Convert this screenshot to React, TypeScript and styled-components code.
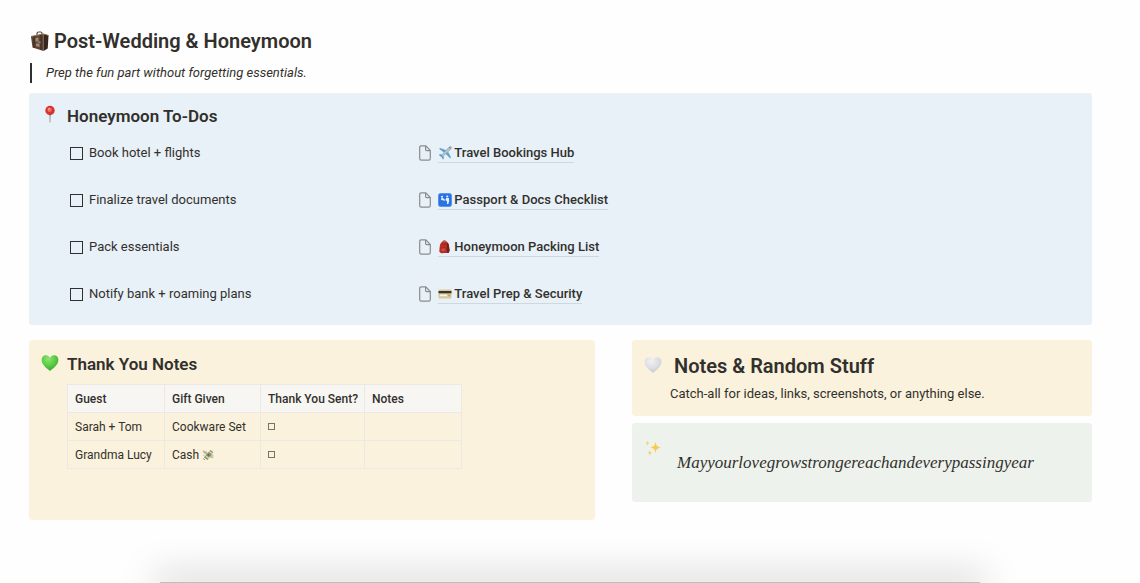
import React from "react";
import styled, { createGlobalStyle } from "styled-components";

const GlobalStyle = createGlobalStyle`
  *, *::before, *::after { box-sizing: border-box; }
  body {
    margin: 0;
    background: #fefefe;
    color: #32302c;
    font-family: Roboto, "Liberation Sans", sans-serif;
    font-size: 13px;
    line-height: 20px;
  }
`;

const Page = styled.main`
  padding: 28px 48px 62px 29px;
`;

const PageTitle = styled.h1`
  display: flex;
  align-items: center;
  gap: 3px;
  margin: 0;
  font-size: 20px;
  line-height: 26px;
  font-weight: 600;
`;

const Quote = styled.blockquote`
  margin: 9px 0 10px 1px;
  padding-left: 14px;
  border-left: 2px solid #32302c;
  font-style: italic;
`;

type Tone = "blue" | "yellow" | "green";
const tones: Record<Tone, string> = {
  blue: "#e8f0f8",
  yellow: "#faf2dd",
  green: "#edf2ec",
};

const Callout = styled.section<{ $tone: Tone; $top?: number; $bottom?: number }>`
  display: grid;
  grid-template-columns: 24px minmax(0, 1fr);
  column-gap: 5px;
  align-items: start;
  padding: ${(p) => p.$top ?? 12}px 10px ${(p) => p.$bottom ?? 12}px 9px;
  border-radius: 3px;
  background: ${(p) => tones[p.$tone]};
`;

const CalloutIcon = styled.span<{ $large?: boolean }>`
  display: flex;
  justify-content: center;
  align-items: flex-end;
  height: ${(p) => (p.$large ? 22 : 20)}px;
`;

const Heading = styled.h2<{ $large?: boolean }>`
  margin: 0;
  padding-left: ${(p) => (p.$large ? 4 : 0)}px;
  font-size: ${(p) => (p.$large ? 20 : 17)}px;
  line-height: ${(p) => (p.$large ? 28 : 24)}px;
  font-weight: 600;
`;

const TodoColumns = styled.div`
  display: grid;
  grid-template-columns: 349fr 665fr;
  margin-top: 15px;
`;

const List = styled.ul`
  display: flex;
  flex-direction: column;
  gap: 27px;
  margin: 0;
  padding: 0 0 0 3px;
  list-style: none;
`;

const Item = styled.li`
  display: flex;
  align-items: center;
  height: 20px;
`;

const TodoLabel = styled.label`
  display: flex;
  align-items: center;
  gap: 6px;
`;

const Check = styled.input<{ $small?: boolean }>`
  appearance: none;
  display: block;
  flex: none;
  width: ${(p) => (p.$small ? 7 : 13)}px;
  height: ${(p) => (p.$small ? 7 : 13)}px;
  margin: 0;
  border: 1px solid ${(p) => (p.$small ? "#77736a" : "#32302c")};
  border-radius: 0;
`;

const PageLink = styled.a`
  display: flex;
  align-items: center;
  gap: 7px;
  color: inherit;
  font-weight: 500;
  text-decoration: none;
`;

const LinkText = styled.span`
  display: flex;
  align-items: center;
  gap: 2px;
  line-height: 18px;
  border-bottom: 1px solid #d0d7dd;
`;

const Columns = styled.div`
  display: grid;
  grid-template-columns: 566fr 460fr;
  gap: 37px;
  align-items: start;
  margin-top: 15px;
`;

const Stack = styled.div`
  display: flex;
  flex-direction: column;
  gap: 7px;
`;

const Table = styled.table`
  margin-top: 8px;
  border-collapse: collapse;
  table-layout: fixed;
  width: 394px;
  font-size: 12px;
  line-height: 16px;
  th, td {
    height: 28px;
    padding: 0 7px;
    border: 1px solid #ece8e4;
    text-align: left;
    font-weight: 400;
    white-space: nowrap;
  }
  th {
    background: #f7f6f3;
    font-weight: 500;
  }
`;

const CellText = styled.span`
  display: flex;
  align-items: center;
  gap: 3px;
`;

const Body = styled.p`
  margin: 4px 0 0;
`;

const Equation = styled.p`
  margin: 14px 0 0 7px;
  font-family: "Liberation Serif", serif;
  font-style: italic;
  font-size: 17px;
  line-height: 24px;
`;

const DockShadow = styled.div`
  position: fixed;
  left: 14%;
  right: 14%;
  bottom: 0;
  height: 1px;
  background: #bdbdbd;
  box-shadow: 0 0 36px 6px rgba(0, 0, 0, 0.26);
`;

const Suitcase = () => (
  <svg width="22" height="22" viewBox="0 0 22 22" aria-hidden="true">
    <path d="M8 5V3.400Q8 2 9.600 2h2Q13 2 13 3.400V5" fill="none" stroke="#5b4a3c" strokeWidth="1.200" />
    <path d="M2 6.500 14.500 4v17L3.500 17.500Z" fill="#5d4330" />
    <path d="m14.500 4 5 1.500-.8 13-4.200 2.500Z" fill="#35241a" />
    <path d="m2 6.500 12.500-2.500 5 1.500" fill="none" stroke="#8a6b50" />
    <path d="M5 6.500v11.500M12 5v15M17 5v14" stroke="#3a281c" />
    <path d="m6.500 8 3-.6v4l-3 .2Zm.5 5.500 3.500.5v3L7 16Z" fill="#a08b74" />
    <path d="m8.500 11.500 3-.5v2.500l-3-.3Z" fill="#83786a" />
  </svg>
);

const Pin = () => (
  <svg width="12" height="19" viewBox="0 0 12 19" aria-hidden="true">
    <path d="M5.400 8h1.300l-.3 9-.4 1-.4-1Z" fill="#8b9299" />
    <circle cx="6" cy="5.500" r="4.700" fill="#d6332f" />
    <circle cx="5.600" cy="4.800" r="2.200" fill="#ed6a62" />
    <circle cx="5" cy="4" r=".9" fill="#f8aaa2" />
  </svg>
);

const Heart = ({ light, dark, mid }: { light: string; dark: string; mid: string }) => {
  const id = `heart${mid.slice(1)}`;
  return (
    <svg width="18" height="18" viewBox="0 0 18 18" aria-hidden="true">
      <defs>
        <radialGradient id={id} cx=".4" cy=".25" r=".8">
          <stop offset="0" stopColor={light} />
          <stop offset=".55" stopColor={mid} />
          <stop offset="1" stopColor={dark} />
        </radialGradient>
      </defs>
      <path
        d="M9 17C6.500 15 .6 11 .6 5.800.6 3 2.400 1.200 4.800 1.200 6.700 1.200 8.200 2.200 9 4c.8-1.800 2.300-2.800 4.200-2.800 2.400 0 4.200 1.800 4.200 4.600C17.400 11 11.500 15 9 17Z"
        fill={`url(#${id})`}
      />
    </svg>
  );
};

const Sparkles = () => (
  <svg width="18" height="18" viewBox="0 0 18 18" aria-hidden="true">
    <path d="M11.500 2.500c.6 4 1.400 5 5.500 6-4.100.9-4.900 1.900-5.500 6-.6-4.100-1.400-5.100-5.300-6 3.900-1 4.700-2 5.300-6Z" fill="#f6cb4f" />
    <path d="M3.500 1.500c.3 1.900.7 2.300 2.300 2.700-1.600.4-2 .8-2.300 2.600-.3-1.800-.7-2.200-2.200-2.600 1.500-.4 1.900-.8 2.200-2.700ZM5.800 11c.3 2 .8 2.500 2.500 3-1.700.4-2.200.9-2.500 2.900-.3-2-.8-2.500-2.400-2.900 1.600-.5 2.100-1 2.400-3Z" fill="#f2d178" />
  </svg>
);

const FileIcon = () => (
  <svg width="12" height="16" viewBox="0 0 12 16" fill="none" stroke="#8a8d8d" aria-hidden="true">
    <path d="M2.200.8h4.600l4.500 4.700v8q0 1.600-1.600 1.600H2.300q-1.600 0-1.600-1.600V2.400Q.7.8 2.200.8Z" strokeWidth="1.200" />
    <path d="M6.600 1v3.500q0 1.200 1.200 1.200h3.400" strokeWidth="1.200" />
  </svg>
);

const Plane = () => (
  <svg width="14" height="14" viewBox="0 0 14 14" aria-hidden="true">
    <path d="M1 2.700 2.300 2l6 2.200-2.100 2.600ZM12.300 12.600l.6-1.300-2.800-5.600-2.500 2.100Z" fill="#58a5d2" />
    <path d="m.8 9 1-.7 2.500.4 1 1.100.5 2.600-.8 1-1.400-2.700Z" fill="#4b91bf" />
    <path d="M13.200.8c.7.8-.3 2.100-1.100 2.900l-7 6.500-2.200.9.800-2.200 6.600-7c.9-.9 2.200-1.800 2.900-1.100Z" fill="#b8c6ce" stroke="#728d9d" strokeWidth=".5" />
    <path d="m11.300 1.600 1.100 1" stroke="#426579" />
  </svg>
);

const Passport = () => (
  <svg width="14" height="14" viewBox="0 0 14 14" aria-hidden="true">
    <rect x=".5" y=".5" width="13" height="13" rx="2" fill="#2872e4" stroke="#5594ed" />
    <circle cx="4" cy="3.800" r="1" fill="#eef5ff" />
    <path d="M3 5.200 5 5l1.400 1.500 1.200-.2v1L6 7.700l-1.200-.5L3.200 7Z" fill="#e7f0ff" />
    <circle cx="9.300" cy="3.500" r="1.100" fill="#e7f0ff" />
    <path d="M8 5h2.800l.4 3-.9 3H8.900l.2-2.500L8 7.500Z" fill="#e7f0ff" />
  </svg>
);

const Backpack = () => (
  <svg width="14" height="14" viewBox="0 0 14 14" aria-hidden="true">
    <path d="M4.500 2.500Q4.700.7 6.500.8t1.800 1.500" fill="none" stroke="#8d2922" />
    <path d="M1.900 5.500Q2.500 1.600 6.500 1.600t4.400 3.900l.7 5-.8 2.200-7.600.6-1.900-1.600.2-3.200Z" fill="#bd3028" />
    <path d="M8.800 2.300Q10.700 3.300 10.900 5.500l.7 5-.8 2.200-2 .2Z" fill="#74201c" />
    <path d="M2.800 8h5v3.800h-5ZM3.700 4.600h4.500" fill="#d6473d" stroke="#852720" strokeWidth=".6" />
  </svg>
);

const Card = () => (
  <svg width="14" height="14" viewBox="0 0 14 14" aria-hidden="true">
    <rect x=".5" y="2.500" width="13" height="9" rx="1" fill="#d9c99a" />
    <path d="M.5 4h13v2.300H.5Z" fill="#38352d" />
    <path d="M2 7.500h7v1.700H2Z" fill="#f7f3e5" />
    <path d="M10 7.500h2.200v1.700H10Z" fill="#bda66b" />
  </svg>
);

const Money = () => (
  <svg width="12" height="12" viewBox="0 0 12 12" aria-hidden="true">
    <path d="M.6 1.200 4.500 2.500l2 2.600-1 1.500L1.500 4Z" fill="#bdb69f" />
    <path d="m11.500 5.700-1.600-.5-2.400 1.300-.2 2L11 9.500Z" fill="#c9c3b0" />
    <path d="m8.300.9 3 2L5.600 11 2 8.600Z" fill="#8c956d" />
    <path d="m7.200 2.400 3 2M4 7.200l2.900 2" stroke="#e4dfb9" strokeWidth="1.200" />
    <circle cx="6.500" cy="6" r="1" fill="#5f6d48" />
    <path d="m1 9.500 2 1.300M1.500 6.500l1 .6" stroke="#9d987f" />
  </svg>
);

const todos = ["Book hotel + flights", "Finalize travel documents", "Pack essentials", "Notify bank + roaming plans"];

const links = [
  { icon: <Plane />, text: "Travel Bookings Hub" },
  { icon: <Passport />, text: "Passport & Docs Checklist" },
  { icon: <Backpack />, text: "Honeymoon Packing List" },
  { icon: <Card />, text: "Travel Prep & Security" },
];

const gifts = [
  { guest: "Sarah + Tom", gift: "Cookware Set", icon: null },
  { guest: "Grandma Lucy", gift: "Cash", icon: <Money /> },
];

export default function App() {
  return (
    <>
      <GlobalStyle />
      <Page>
        <PageTitle><Suitcase />Post-Wedding &amp; Honeymoon</PageTitle>
        <Quote>Prep the fun part without forgetting essentials.</Quote>

        <Callout $tone="blue" $top={11} $bottom={21}>
          <CalloutIcon><Pin /></CalloutIcon>
          <div>
            <Heading>Honeymoon To-Dos</Heading>
            <TodoColumns>
              <List>
                {todos.map((text) => (
                  <Item key={text}>
                    <TodoLabel><Check type="checkbox" />{text}</TodoLabel>
                  </Item>
                ))}
              </List>
              <List>
                {links.map(({ icon, text }) => (
                  <Item key={text}>
                    <PageLink href="#"><FileIcon /><LinkText>{icon}{text}</LinkText></PageLink>
                  </Item>
                ))}
              </List>
            </TodoColumns>
          </div>
        </Callout>

        <Columns>
          <Callout $tone="yellow" $bottom={51}>
            <CalloutIcon><Heart light="#8ee66f" mid="#58c943" dark="#379f2d" /></CalloutIcon>
            <div>
              <Heading>Thank You Notes</Heading>
              <Table>
                <colgroup>
                  <col width="97" /><col width="96" /><col width="104" /><col width="97" />
                </colgroup>
                <thead>
                  <tr><th>Guest</th><th>Gift Given</th><th>Thank You Sent?</th><th>Notes</th></tr>
                </thead>
                <tbody>
                  {gifts.map(({ guest, gift, icon }) => (
                    <tr key={guest}>
                      <td>{guest}</td>
                      <td><CellText>{gift}{icon}</CellText></td>
                      <td><Check $small type="checkbox" aria-label={`Thank you sent to ${guest}`} /></td>
                      <td />
                    </tr>
                  ))}
                </tbody>
              </Table>
            </div>
          </Callout>

          <Stack>
            <Callout $tone="yellow">
              <CalloutIcon $large><Heart light="#f1f1f4" mid="#dedee2" dark="#c6c6cc" /></CalloutIcon>
              <div>
                <Heading $large>Notes &amp; Random Stuff</Heading>
                <Body>Catch-all for ideas, links, screenshots, or anything else.</Body>
              </div>
            </Callout>
            <Callout $tone="green" $top={14} $bottom={27}>
              <CalloutIcon><Sparkles /></CalloutIcon>
              <Equation>Mayyourlovegrowstrongereachandeverypassingyear</Equation>
            </Callout>
          </Stack>
        </Columns>
      </Page>
      <DockShadow />
    </>
  );
}
